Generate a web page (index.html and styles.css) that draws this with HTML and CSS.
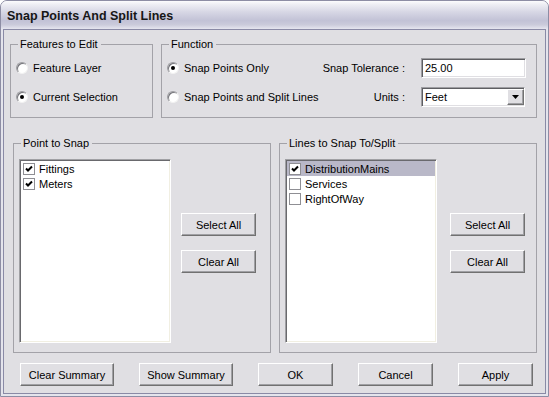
FILE: index.html
```html
<!DOCTYPE html>
<html lang="en">
<head>
    <meta charset="UTF-8">
    <title>Snap Points And Split Lines</title>
    <link rel="stylesheet" href="styles.css">
</head>
<body>
    <div class="window">
        <div class="titlebar">Snap Points And Split Lines</div>
        <div class="client">
            <div class="row-top">
                <fieldset class="group features">
                    <legend>Features to Edit</legend>
                    <label class="opt"><span class="radio"></span>Feature Layer</label>
                    <label class="opt"><span class="radio on"></span>Current Selection</label>
                </fieldset>
                <fieldset class="group function">
                    <legend>Function</legend>
                    <div class="function-grid">
                        <label class="opt"><span class="radio on"></span>Snap Points Only</label>
                        <span class="field-label">Snap Tolerance :</span>
                        <div class="textbox">25.00</div>
                        <label class="opt"><span class="radio"></span>Snap Points and Split Lines</label>
                        <span class="field-label">Units :</span>
                        <div class="combo">
                            <span class="combo-text">Feet</span>
                            <span class="drop">
                                <svg width="7" height="4" viewBox="0 0 7 4"><path d="M0 0h7L3.5 4z" fill="#000"/></svg>
                            </span>
                        </div>
                    </div>
                </fieldset>
            </div>

            <div class="row-mid">
                <fieldset class="group list-group">
                    <legend>Point to Snap</legend>
                    <div class="list-wrap">
                        <div class="listbox">
                            <div class="item"><span class="check on"></span>Fittings</div>
                            <div class="item"><span class="check on"></span>Meters</div>
                        </div>
                        <div class="btn-col">
                            <div class="btn">Select All</div>
                            <div class="btn">Clear All</div>
                        </div>
                    </div>
                </fieldset>
                <fieldset class="group list-group">
                    <legend>Lines to Snap To/Split</legend>
                    <div class="list-wrap">
                        <div class="listbox">
                            <div class="item sel"><span class="check on"></span>DistributionMains</div>
                            <div class="item"><span class="check"></span>Services</div>
                            <div class="item"><span class="check"></span>RightOfWay</div>
                        </div>
                        <div class="btn-col right">
                            <div class="btn">Select All</div>
                            <div class="btn">Clear All</div>
                        </div>
                    </div>
                </fieldset>
            </div>

            <div class="row-bottom">
                <div class="btn wide">Clear Summary</div>
                <div class="btn wide">Show Summary</div>
                <div class="btn">OK</div>
                <div class="btn">Cancel</div>
                <div class="btn">Apply</div>
            </div>
        </div>
    </div>
</body>
</html>
```

FILE: styles.css
```css
* {
    box-sizing: border-box;
}
body {
    margin: 0;
    background: #ffffff;
    font-family: "Liberation Sans", Arial, sans-serif;
    font-size: 11px;
    color: #000000;
}
.window {
    width: 549px;
    height: 397px;
    border: 1px solid #8d8da4;
    border-radius: 7px 7px 0 0;
    background: #e4e4ec;
    display: flex;
    flex-direction: column;
    overflow: hidden;
}
.titlebar {
    height: 28px;
    padding: 2px 0 0 6px;
    line-height: 26px;
    font-size: 12.5px;
    font-weight: bold;
    color: #161616;
    background: linear-gradient(to bottom, #fcfcfd 0%, #eeeef4 12%, #d6d6e4 40%, #c2c2d6 70%, #cbcbdb 85%, #e6e6ef 100%);
}
.client {
    flex: 1;
    margin: 0 2px 2px;
    border: 1px solid #8a8aa6;
    background: #e0dfe3;
    padding-top: 8px;
}
.row-top {
    display: flex;
    gap: 8px;
    padding-left: 6px;
}
.group {
    margin: 0;
    min-width: 0;
    border: 1px solid #a3a2a8;
    padding: 2px 5px 0;
}
legend {
    margin-left: 2px;
    padding: 0 3px 0 2px;
    line-height: 13px;
}
.features {
    width: 143px;
    height: 80px;
}
.function {
    width: 376px;
    height: 80px;
}
.opt {
    display: flex;
    align-items: center;
    gap: 5px;
    height: 29px;
    white-space: nowrap;
}
.radio {
    position: relative;
    flex: none;
    width: 12px;
    height: 12px;
    border-radius: 50%;
    background: #ffffff;
    border: 1px solid;
    border-color: #9d9da1 #f2f2f2 #f2f2f2 #9d9da1;
    box-shadow: inset 1px 1px 0 #74747a;
}
.radio.on::after {
    content: "";
    position: absolute;
    left: 3px;
    top: 3px;
    width: 4px;
    height: 4px;
    border-radius: 50%;
    background: #000000;
}
.function-grid {
    display: grid;
    grid-template-columns: minmax(0, 1fr) auto 105px;
    grid-auto-rows: 29px;
    align-items: center;
    column-gap: 16px;
    padding-right: 5px;
}
.field-label {
    justify-self: end;
    white-space: nowrap;
}
.textbox, .combo {
    height: 20px;
    background: #ffffff;
    border: 1px solid;
    border-color: #9d9da1 #ffffff #ffffff #9d9da1;
    box-shadow: inset 1px 1px 0 #5e5e62, inset -1px -1px 0 #e0dfe3;
}
.textbox {
    padding-left: 3px;
    line-height: 18px;
}
.combo {
    width: 104px;
    display: flex;
    align-items: center;
    padding: 0 0 0 3px;
}
.combo-text {
    flex: 1;
}
.drop {
    width: 17px;
    height: 16px;
    display: flex;
    align-items: center;
    justify-content: center;
    background: #e0dfe3;
    border: 1px solid;
    border-color: #ffffff #717171 #717171 #ffffff;
    box-shadow: inset -1px -1px 0 #a0a0a4;
}
.row-mid {
    display: flex;
    gap: 8px;
    padding-left: 9px;
    margin-top: 19px;
}
.list-group {
    width: 258px;
    height: 216px;
    padding: 9px 0 0 5px;
}
.list-wrap {
    display: flex;
    align-items: flex-start;
}
.listbox {
    width: 152px;
    height: 184px;
    padding: 1px;
    background: #ffffff;
    border: 1px solid;
    border-color: #a0a0a4 #ffffff #ffffff #a0a0a4;
    box-shadow: inset 1px 1px 0 #69696d, inset -1px -1px 0 #f1efe2;
}
.item {
    display: flex;
    align-items: center;
    gap: 4px;
    height: 15px;
    padding-left: 2px;
    white-space: nowrap;
}
.item.sel {
    background: #b9b8c8;
}
.check {
    flex: none;
    width: 12px;
    height: 12px;
    border: 1px solid #8f8f94;
    background: #ffffff;
}
.check.on {
    background: #ffffff url("data:image/svg+xml,%3Csvg xmlns='http://www.w3.org/2000/svg' width='10' height='10'%3E%3Cpath d='M2 4.5l2 2 4-4' fill='none' stroke='%23000' stroke-width='2'/%3E%3C/svg%3E") no-repeat center;
}
.btn-col {
    display: flex;
    flex-direction: column;
    gap: 14px;
    margin: 54px 0 0 10px;
}
.btn-col.right {
    margin-left: 13px;
}
.btn {
    width: 75px;
    height: 23px;
    display: flex;
    align-items: center;
    justify-content: center;
    background: #e0dfe3;
    border: 1px solid;
    border-color: #ffffff #717171 #717171 #ffffff;
    box-shadow: inset -1px -1px 0 #a0a0a4;
    white-space: nowrap;
}
.btn.wide {
    width: 94px;
}
.row-bottom {
    display: flex;
    gap: 25px;
    padding-left: 16px;
    margin-top: 10px;
}
```
